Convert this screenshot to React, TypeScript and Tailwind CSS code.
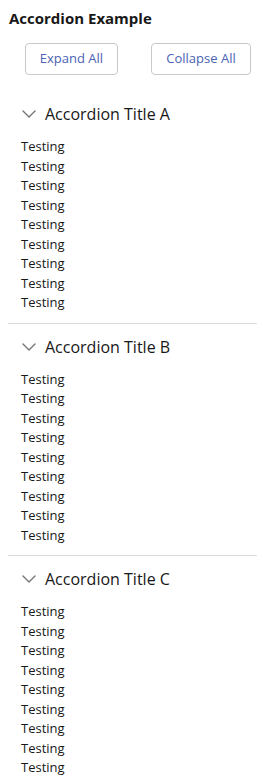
import React from "react";

const font = { fontFamily: '"Open Sans", "Noto Sans", Arial, sans-serif' };

function Chevron() {
  return (
    <svg width="14" height="8" viewBox="0 0 14 8" className="shrink-0">
      <path d="M1 1 L7 7 L13 1" fill="none" stroke="#747474" strokeWidth="1.4" strokeLinecap="round" strokeLinejoin="round" />
    </svg>
  );
}

function Section({ title, first }: { title: string; first?: boolean }) {
  const lines = Array.from({ length: 9 });
  return (
    <div className={first ? "pt-[11px] pb-[10px]" : "border-t border-[#dcdcdc] pt-[11px] pb-[10px]"}>
      <div className="h-6 flex items-center pl-[14px]">
        <Chevron />
        <span className="ml-[9px] text-[16px] leading-6 text-[#181818]">{title}</span>
      </div>
      <div className="mt-[11px] pl-[13px] text-[13px] leading-[19.5px] text-[#181818]">
        {lines.map((_, i) => (
          <div key={i}>Testing</div>
        ))}
      </div>
    </div>
  );
}

export default function App() {
  return (
    <div className="w-[257px] bg-white" style={font}>
      <div className="pl-[9px] pt-[7px] h-[29px] text-[15px] font-bold leading-[22px] text-[#181818]">Accordion Example</div>
      <div className="flex mt-[14px] pl-[25px] gap-[33px]">
        <button className="h-8 w-[93px] rounded border border-[#c9c9c9] text-[13px] text-[#4a63b3] bg-white">Expand All</button>
        <button className="h-8 w-[100px] rounded border border-[#c9c9c9] text-[13px] text-[#4a63b3] bg-white">Collapse All</button>
      </div>
      <div className="mt-4 pl-2">
        <Section title="Accordion Title A" first />
        <Section title="Accordion Title B" />
        <Section title="Accordion Title C" />
      </div>
    </div>
  );
}
